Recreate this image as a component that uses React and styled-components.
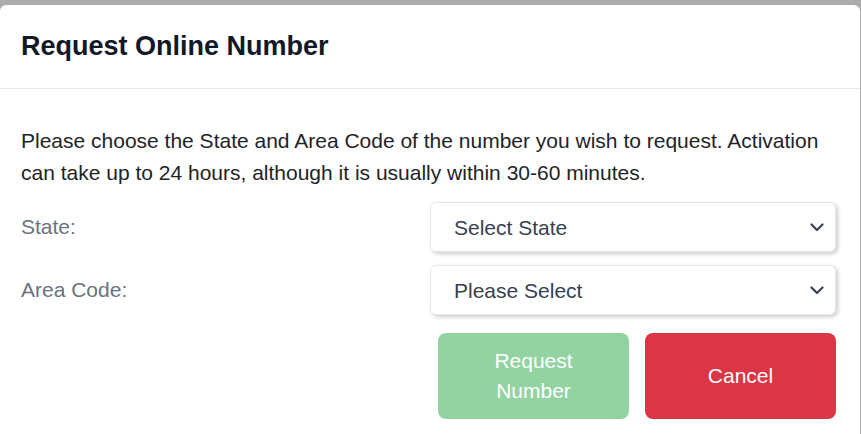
import styled, { createGlobalStyle } from 'styled-components';

const GlobalStyle = createGlobalStyle`
  html, body {
    margin: 0;
    padding: 0;
    background: #acacac;
    font-family: "Liberation Sans", Arial, sans-serif;
  }
  * {
    box-sizing: border-box;
  }
`;

const Backdrop = styled.div`
  height: 434px;
  padding: 5px 1px 0 0;
  overflow: hidden;
`;

const Modal = styled.div`
  background: #ffffff;
  border-radius: 6px 6px 0 0;
  height: 100%;
`;

const Header = styled.div`
  height: 84px;
  display: flex;
  align-items: center;
  padding: 0 21px;
  border-bottom: 1px solid #e5e7eb;
`;

const Title = styled.h2`
  margin: 0;
  font-size: 27px;
  font-weight: 700;
  color: #111827;
`;

const Body = styled.div`
  padding: 36px 24px 0 21px;
`;

const Intro = styled.p`
  margin: 0 0 14px;
  font-size: 21px;
  line-height: 1.5;
  color: #1f2328;
`;

const FormRow = styled.div`
  display: grid;
  grid-template-columns: 409px 1fr;
  align-items: center;
  margin-bottom: ${(p) => p.$gap || 0}px;
`;

const Label = styled.label`
  font-size: 21px;
  color: #6b7280;
`;

const SelectWrap = styled.div`
  position: relative;
`;

const Select = styled.select`
  width: 100%;
  height: 50px;
  padding: 0 40px 0 23px;
  font-family: inherit;
  font-size: 21px;
  color: #374151;
  background: #ffffff;
  border: 1px solid #e5e7eb;
  border-radius: 6px;
  box-shadow: 2px 2px 4px rgba(0, 0, 0, 0.2);
  appearance: none;
  outline: none;
`;

const Chevron = styled.svg`
  position: absolute;
  right: 7px;
  top: 50%;
  transform: translateY(-50%);
  pointer-events: none;
`;

const Actions = styled.div`
  display: flex;
  gap: 16px;
  padding-left: 8px;
`;

const Button = styled.button`
  flex: 1;
  height: 86px;
  border: none;
  border-radius: 8px;
  font-family: inherit;
  font-size: 21px;
  line-height: 1.45;
  color: #ffffff;
  padding: 0 40px;
  background: ${(p) => (p.$variant === 'danger' ? '#dc3545' : '#93d3a2')};
`;

function Dropdown({ id, placeholder }) {
  return (
    <SelectWrap>
      <Select id={id} defaultValue="">
        <option value="">{placeholder}</option>
      </Select>
      <Chevron width="24" height="24" viewBox="0 0 24 24" fill="none">
        <path d="M6.5 9.5 12 15l5.5-5.5" stroke="#374151" strokeWidth="2.2" strokeLinecap="round" strokeLinejoin="round" />
      </Chevron>
    </SelectWrap>
  );
}

export default function App() {
  return (
    <>
      <GlobalStyle />
      <Backdrop>
        <Modal>
          <Header>
            <Title>Request Online Number</Title>
          </Header>
          <Body>
            <Intro>
              Please choose the State and Area Code of the number you wish to request. Activation can take up to 24
              hours, although it is usually within 30-60 minutes.
            </Intro>
            <FormRow $gap={13}>
              <Label htmlFor="state">State:</Label>
              <Dropdown id="state" placeholder="Select State" />
            </FormRow>
            <FormRow $gap={18}>
              <Label htmlFor="area">Area Code:</Label>
              <Dropdown id="area" placeholder="Please Select" />
            </FormRow>
            <FormRow>
              <span />
              <Actions>
                <Button type="button">Request Number</Button>
                <Button type="button" $variant="danger">Cancel</Button>
              </Actions>
            </FormRow>
          </Body>
        </Modal>
      </Backdrop>
    </>
  );
}
